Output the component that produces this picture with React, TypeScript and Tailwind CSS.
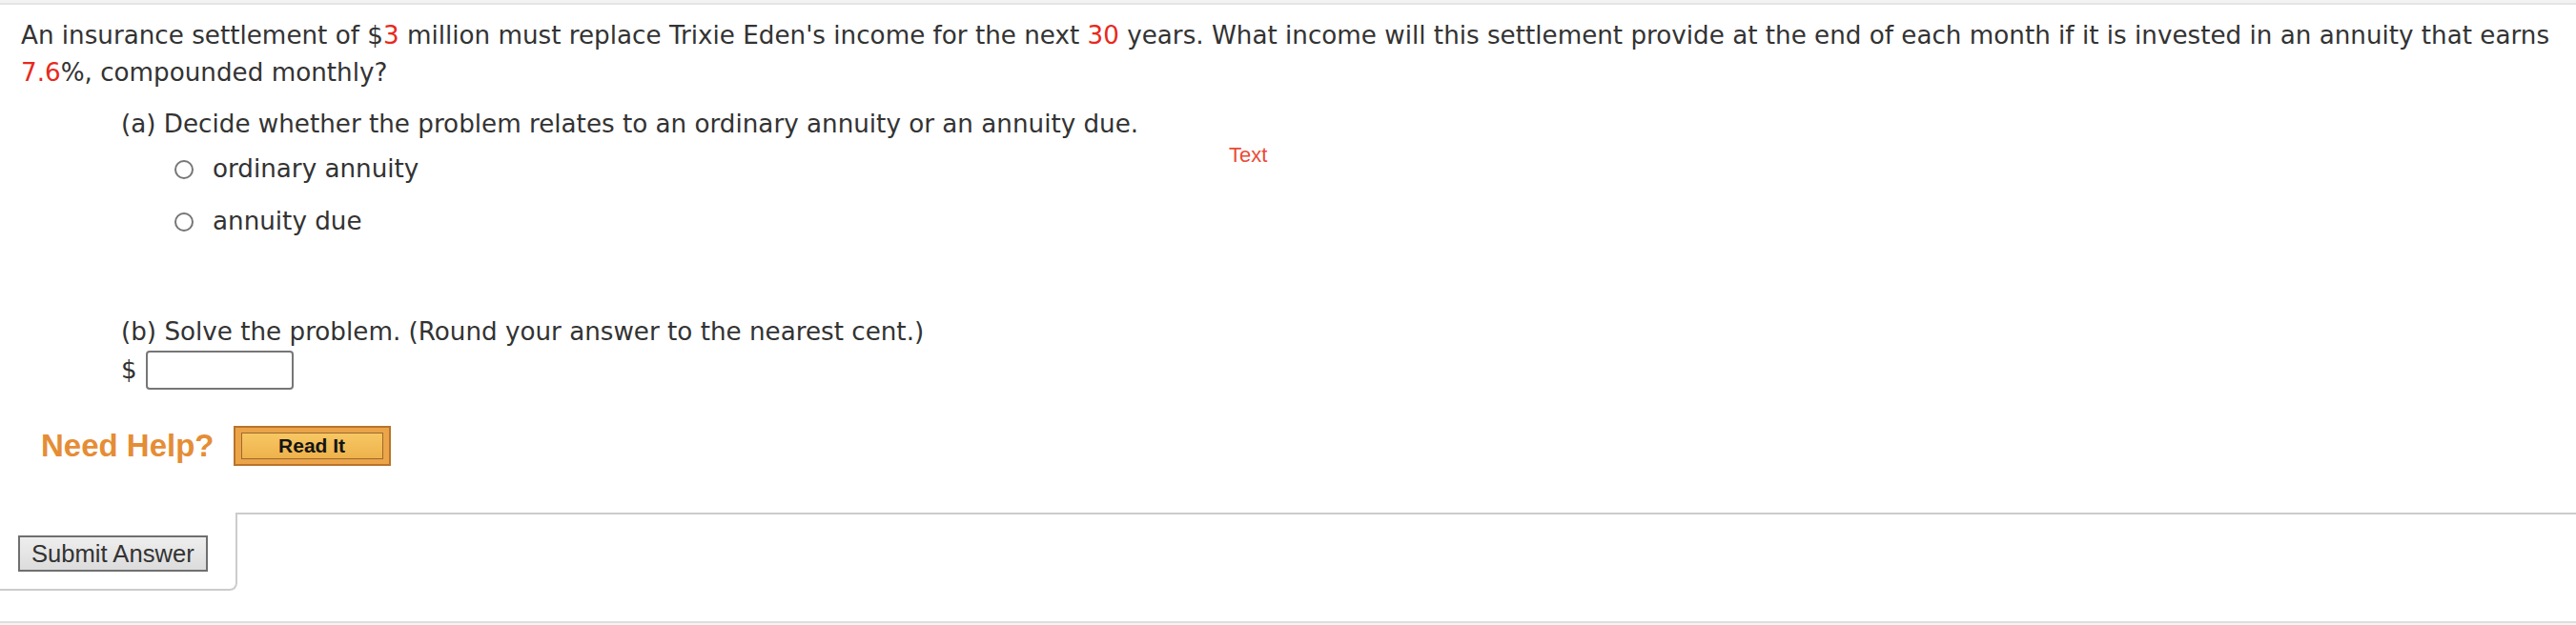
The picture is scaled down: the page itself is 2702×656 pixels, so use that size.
import React from 'react'

function Radio({ label }: { label: string }) {
  return (
    <label className="flex items-center h-[55px] pl-[56px]">
      <span className="w-[20px] h-[20px] rounded-full border-2 border-[#767676] bg-white"></span>
      <span className="ml-[20px]">{label}</span>
    </label>
  )
}

export default function App() {
  return (
    <div className="w-[2702px] h-[656px] flex flex-col bg-white text-[#333] font-['DejaVu_Sans',Verdana,sans-serif] text-[26.2px] leading-[39px]">
      {/* top rule */}
      <div className="h-[5px] bg-[#f3f3f3] border-b-2 border-[#e4e4e4]"></div>

      <div className="pl-[22px] pr-[10px] mt-[13px]">
        <p>
          An insurance settlement of $<span className="text-[#e8291c]">3</span> million must replace Trixie Eden's income for the next{' '}
          <span className="text-[#e8291c]">30</span> years. What income will this settlement provide at the end of each month if it is
          invested in an annuity that earns <span className="text-[#e8291c]">7.6</span>%, compounded monthly?
        </p>

        {/* part a */}
        <div className="flex mt-[15px]">
          <div className="w-[1267px] pl-[105px]">
            <div>(a) Decide whether the problem relates to an ordinary annuity or an annuity due.</div>
            <Radio label="ordinary annuity" />
            <Radio label="annuity due" />
          </div>
          <div className="mt-[39px] h-[26px] leading-[26px] text-[22px] text-[#ea4b35] font-['Liberation_Sans',Arial,sans-serif]">
            Text
          </div>
        </div>

        {/* part b */}
        <div className="pl-[105px] mt-[69px]">
          <div>(b) Solve the problem. (Round your answer to the nearest cent.)</div>
          <div className="flex items-center">
            <span>$</span>
            <input
              type="text"
              className="ml-[9px] w-[155px] h-[41px] border-2 border-[#767676] rounded-[4px] bg-white outline-none"
            />
          </div>
        </div>

        {/* help */}
        <div className="flex items-center mt-[38px] pl-[21px] font-['Liberation_Sans',Arial,sans-serif]">
          <span className="text-[33px] leading-[40px] font-bold text-[#e58d35]">Need Help?</span>
          <button className="ml-[20px] border-2 border-[#b8742a] bg-[#eba449] px-[6px] py-[5px]">
            <span className="flex items-center justify-center w-[149px] h-[28px] border border-[#9c6a2e] bg-gradient-to-b from-[#f7c763] to-[#eeb24c] text-[21px] leading-[26px] font-bold text-[#151515]">
              Read It
            </span>
          </button>
        </div>
      </div>

      {/* submit */}
      <div className="flex items-start mt-[49px]">
        <div className="w-[249px] h-[82px] flex items-center pl-[19px] pt-[5px] border-r-2 border-b-2 border-[#cccccc] rounded-br-[8px]">
          <button className="h-[38px] px-[12px] border-2 border-[#6f6f6f] bg-gradient-to-b from-[#eeeeee] to-[#dcdcdc] text-[25.6px] leading-[30px] text-[#333] font-['Liberation_Sans',Arial,sans-serif]">
            Submit Answer
          </button>
        </div>
        <div className="flex-1 border-t-2 border-[#cccccc]"></div>
      </div>

      <div className="flex-1"></div>
      <div className="h-[4px] border-t-2 border-[#dedede] bg-[#f5f5f5]"></div>
    </div>
  )
}
